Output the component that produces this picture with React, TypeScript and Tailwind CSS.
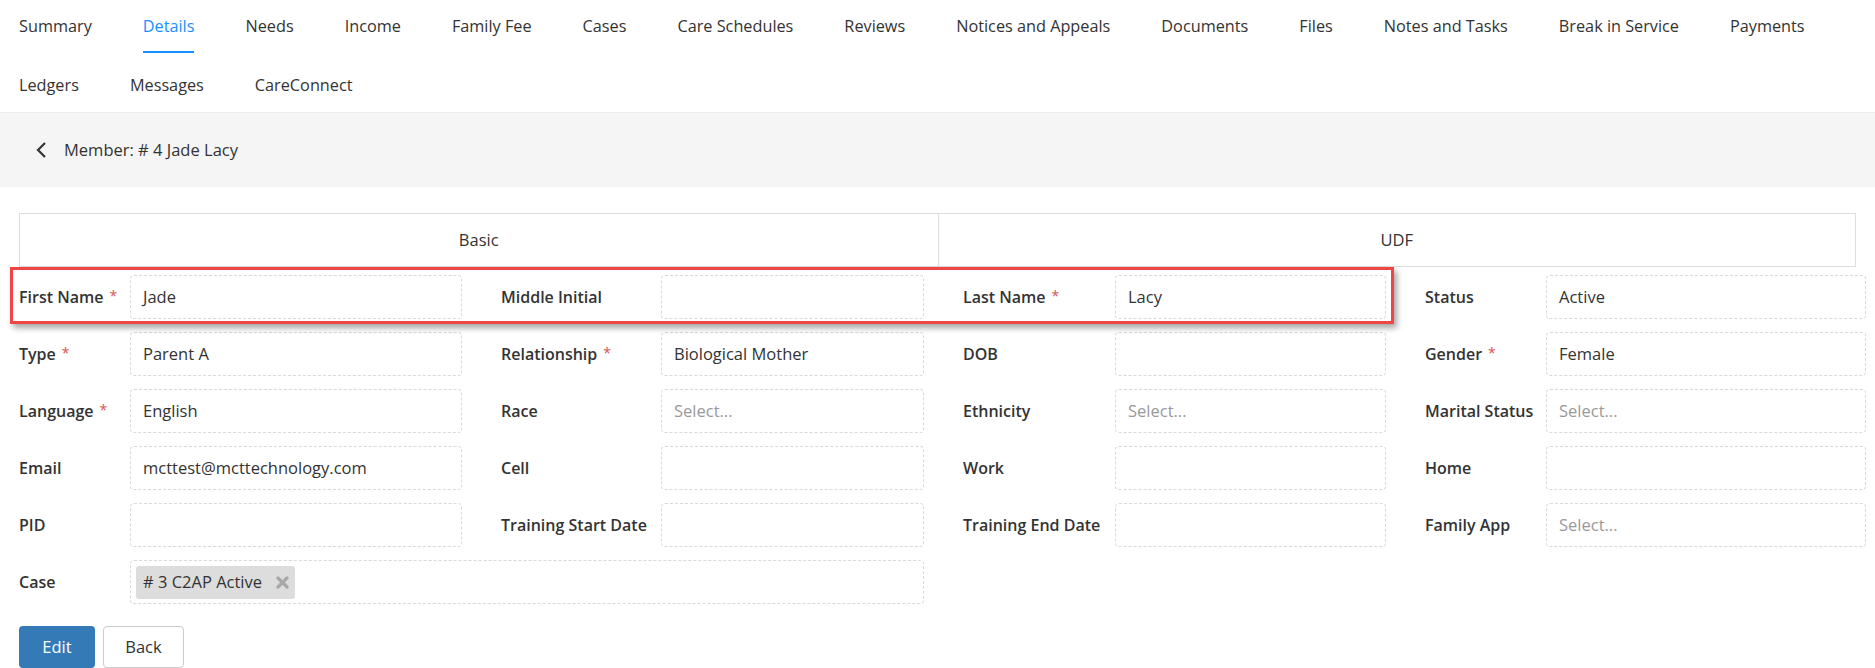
import React from 'react';

type Field = {
  label: string;
  required?: boolean;
  value?: string;
  placeholder?: string;
};

const tabs = [
  'Summary', 'Details', 'Needs', 'Income', 'Family Fee', 'Cases', 'Care Schedules', 'Reviews',
  'Notices and Appeals', 'Documents', 'Files', 'Notes and Tasks', 'Break in Service', 'Payments',
  'Ledgers', 'Messages', 'CareConnect',
];

const rows: Field[][] = [
  [
    { label: 'First Name', required: true, value: 'Jade' },
    { label: 'Middle Initial' },
    { label: 'Last Name', required: true, value: 'Lacy' },
    { label: 'Status', value: 'Active' },
  ],
  [
    { label: 'Type', required: true, value: 'Parent A' },
    { label: 'Relationship', required: true, value: 'Biological Mother' },
    { label: 'DOB' },
    { label: 'Gender', required: true, value: 'Female' },
  ],
  [
    { label: 'Language', required: true, value: 'English' },
    { label: 'Race', placeholder: 'Select...' },
    { label: 'Ethnicity', placeholder: 'Select...' },
    { label: 'Marital Status', placeholder: 'Select...' },
  ],
  [
    { label: 'Email', value: 'mcttest@mcttechnology.com' },
    { label: 'Cell' },
    { label: 'Work' },
    { label: 'Home' },
  ],
  [
    { label: 'PID' },
    { label: 'Training Start Date' },
    { label: 'Training End Date' },
    { label: 'Family App', placeholder: 'Select...' },
  ],
];

const Label: React.FC<{ field: Field; first: boolean }> = ({ field, first }) => (
  <div className={`flex items-center font-semibold text-[16px] text-[#333] whitespace-nowrap ${first ? '' : 'pl-[39px]'}`}>
    {field.label}
    {field.required && <span className="ml-[6px] text-[14px] font-normal text-[#d9534f] relative -top-[2px]">*</span>}
  </div>
);

const Input: React.FC<{ field: Field }> = ({ field }) => (
  <div className="h-[44px] border border-dashed border-[#d9d9d9] rounded-[4px] px-[12px] flex items-center text-[16.5px]">
    {field.value ? (
      <span className="text-[#333]">{field.value}</span>
    ) : field.placeholder ? (
      <span className="text-[#999]">{field.placeholder}</span>
    ) : null}
  </div>
);

const App: React.FC = () => {
  return (
    <div className="relative min-h-screen bg-white text-[#333] font-['Open_Sans',sans-serif]">
      {/* tab strip */}
      <nav className="flex flex-wrap gap-x-[51px] gap-y-[6px] px-[19px] border-b border-[#ebebeb]">
        {tabs.map((t) => (
          <div
            key={t}
            className={`relative h-[53px] flex items-center text-[16.25px] whitespace-nowrap ${t === 'Details' ? 'text-[#1890ff]' : 'text-[#333]'}`}
          >
            {t}
            {t === 'Details' && <div className="absolute left-0 right-0 bottom-0 h-[2px] bg-[#1890ff]" />}
          </div>
        ))}
      </nav>

      {/* breadcrumb */}
      <div className="h-[74px] bg-[#f5f5f5] flex items-center pl-[36px]">
        <svg width="11" height="16" viewBox="0 0 11 16" className="mr-[17px]">
          <path d="M9 1 L2 8 L9 15" fill="none" stroke="#333" strokeWidth="2.2" />
        </svg>
        <span className="text-[16.5px] text-[#333]">Member: # 4 Jade Lacy</span>
      </div>

      <div className="px-[19px] pt-[26px]">
        {/* section tabs */}
        <div className="grid grid-cols-2 h-[54px] border border-[#ddd]">
          <div className="flex items-center justify-center text-[16.5px] text-[#333]">Basic</div>
          <div className="flex items-center justify-center text-[16.5px] text-[#333] border-l border-[#ddd]">UDF</div>
        </div>

        {/* form */}
        <div className="mt-[8px] grid grid-cols-[111px_332px_199px_263px_191px_271px_160px_320px] gap-y-[13px]">
          {rows.map((row, ri) => (
            <React.Fragment key={ri}>
              {row.map((f, fi) => (
                <React.Fragment key={f.label}>
                  <Label field={f} first={fi === 0} />
                  <Input field={f} />
                </React.Fragment>
              ))}
            </React.Fragment>
          ))}
          <div className="flex items-center font-semibold text-[16px] text-[#333]">Case</div>
          <div className="col-span-3 h-[44px] border border-dashed border-[#d9d9d9] rounded-[4px] px-[5px] flex items-center">
            <span className="h-[33px] flex items-center gap-[14px] bg-[#ddd] rounded-[3px] pl-[7px] pr-[6px] text-[16.5px] text-[#333]">
              # 3 C2AP Active
              <svg width="13" height="13" viewBox="0 0 13 13">
                <path d="M2 2 L11 11 M11 2 L2 11" stroke="#a8a8a8" strokeWidth="3.2" strokeLinecap="round" />
              </svg>
            </span>
          </div>
        </div>

        {/* actions */}
        <div className="mt-[22px] flex gap-[8px]">
          <button className="w-[76px] h-[42px] bg-[#337ab7] text-white text-[16.5px] rounded-[4px]">Edit</button>
          <button className="w-[81px] h-[42px] bg-white border border-[#ccc] text-[#333] text-[16.5px] rounded-[4px]">Back</button>
        </div>
      </div>

      {/* highlight annotation */}
      <div className="absolute left-[10px] top-[267px] w-[1384px] h-[57px] border-[3px] border-[#f04545] shadow-[3px_4px_6px_rgba(0,0,0,0.35)] pointer-events-none" />
    </div>
  );
};

export default App;
